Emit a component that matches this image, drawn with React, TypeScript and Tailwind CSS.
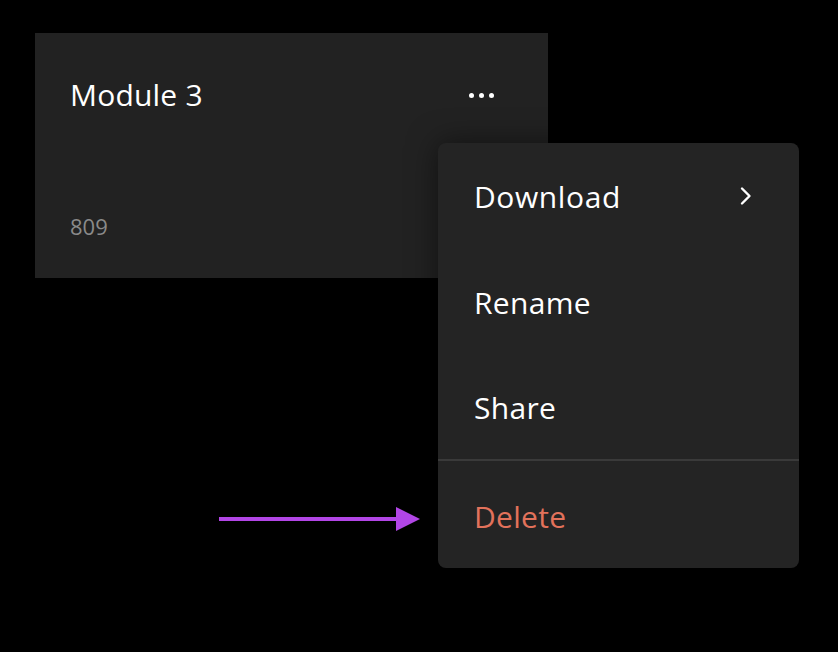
import React from "react";

export default function App() {
  const font = { fontFamily: '"Open Sans", "Noto Sans", sans-serif' };
  return (
    <div className="relative w-[838px] h-[652px] bg-black overflow-hidden font-normal" style={font}>
      <div className="absolute left-[35px] top-[33px] w-[513px] h-[245px] bg-[#222222] flex flex-col pl-[35px] pr-[52px] pt-[43px] pb-[38px]">
        <div className="flex items-center justify-between h-[38px]">
          <span className="text-[30px] leading-[38px] text-white tracking-[0.2px]">Module 3</span>
          <div className="flex gap-[5px] items-center mr-[2px]">
            <span className="w-[5px] h-[5px] rounded-full bg-white" />
            <span className="w-[5px] h-[5px] rounded-full bg-white" />
            <span className="w-[5px] h-[5px] rounded-full bg-white" />
          </div>
        </div>
        <div className="flex-1" />
        <span className="text-[22px] leading-[28px] text-[#8a8a8a]">809</span>
      </div>

      <div className="absolute left-[438px] top-[143px] w-[361px] h-[425px] bg-[#242424] rounded-[8px] shadow-[0_0_30px_rgba(0,0,0,0.5)] flex flex-col">
        <div className="h-[106px] flex items-center justify-between pl-[36px] pr-[46px]">
          <span className="text-[30px] text-white tracking-[0.6px]">Download</span>
          <svg width="14" height="20" viewBox="0 0 14 20" fill="none">
            <path d="M3 2.5 L10.5 10 L3 17.5" stroke="white" strokeWidth="2.4" strokeLinecap="round" strokeLinejoin="round" />
          </svg>
        </div>
        <div className="h-[106px] flex items-center pl-[36px]">
          <span className="text-[30px] text-white tracking-[0.3px]">Rename</span>
        </div>
        <div className="h-[106px] flex items-center pl-[36px] border-b-2 border-[#3a3a3a]">
          <span className="text-[30px] text-white tracking-[0.3px]">Share</span>
        </div>
        <div className="flex-1 flex items-center pl-[36px] pt-[3px]">
          <span className="text-[30px] text-[#e2725b] tracking-[0.3px]">Delete</span>
        </div>
      </div>

      <svg className="absolute left-[215px] top-[500px]" width="215" height="40" viewBox="0 0 215 40">
        <rect x="4" y="17" width="180" height="4" fill="#b246e6" />
        <polygon points="181,7 205,19 181,31" fill="#b246e6" />
      </svg>
    </div>
  );
}
